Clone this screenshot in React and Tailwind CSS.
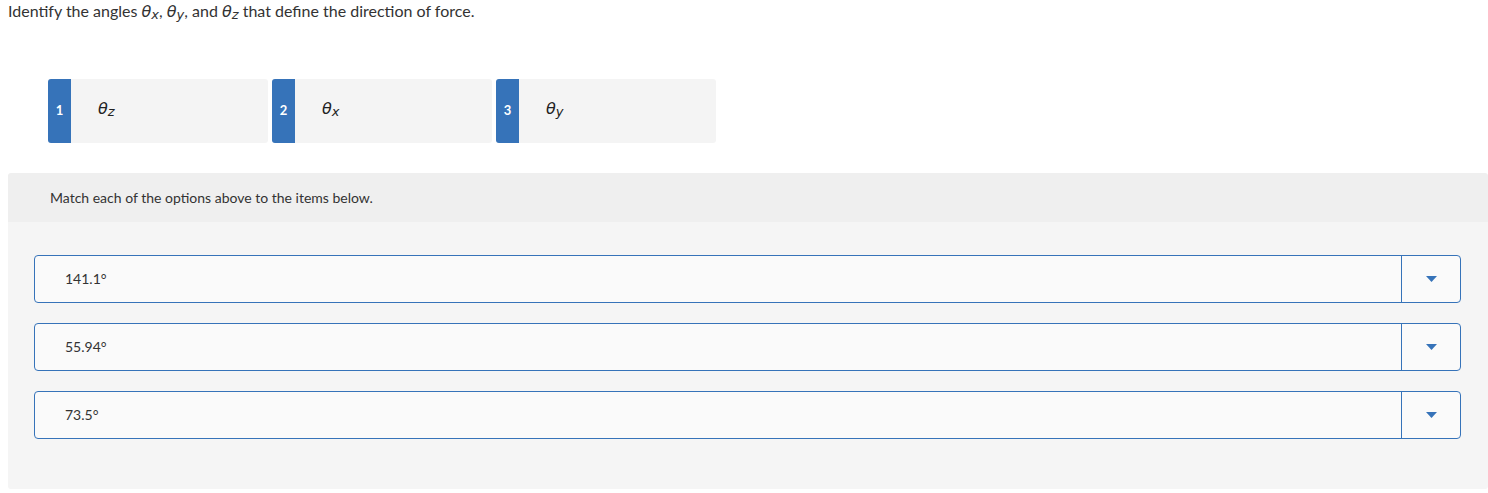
import React from "react";

const Theta = ({ sub, size = "text-[16px]" }) => (
    <span className={`italic font-['DejaVu_Sans',sans-serif] ${size}`}>
        θ<sub className="text-[13px] relative top-[2px]">{sub}</sub>
    </span>
);

const options = [
    { n: 1, sub: "z" },
    { n: 2, sub: "x" },
    { n: 3, sub: "y" },
];

const items = ["141.1°", "55.94°", "73.5°"];

export default function App() {
    return (
        <div className="w-[1488px] h-[493px] bg-white font-['Lato',sans-serif] text-[#333]">
            {/* Question */}
            <p className="pl-2 text-[16px] leading-[22px]">
                Identify the angles <Theta sub="x" />, <Theta sub="y" />, and <Theta sub="z" /> that define the direction of force.
            </p>

            {/* Options */}
            <div className="flex gap-1 pl-12 mt-[56px]">
                {options.map((o) => (
                    <div key={o.n} className="flex w-[220px] h-16 bg-[#f4f4f4] rounded-[3px] overflow-hidden">
                        <div className="w-[23px] bg-[#3673b9] text-white text-[13px] font-bold flex items-center justify-center">
                            {o.n}
                        </div>
                        <div className="flex items-center pl-[27px] pb-1 text-[#222]">
                            <Theta sub={o.sub} />
                        </div>
                    </div>
                ))}
            </div>

            {/* Match panel */}
            <div className="ml-2 mt-[30px] rounded-[3px] overflow-hidden">
                <div className="h-[49px] bg-[#efefef] pl-[42px] pt-[14px] text-[14px]">
                    Match each of the options above to the items below.
                </div>
                <div className="bg-[#f5f5f5] h-[267px] pt-[33px] pl-[26px] pr-[27px] flex flex-col gap-[20px]">
                    {items.map((v) => (
                        <div key={v} className="flex h-[48px] border border-[#3673b9] rounded-[4px] bg-[#fafafa]">
                            <div className="flex-1 flex items-center pl-[30px] pb-[2px] text-[14px]">{v}</div>
                            <div className="w-[59px] border-l border-[#3673b9] flex items-center justify-center">
                                <svg width="11" height="6" viewBox="0 0 11 6">
                                    <path d="M0 0 L11 0 L5.5 6 Z" fill="#3673b9" />
                                </svg>
                            </div>
                        </div>
                    ))}
                </div>
            </div>
        </div>
    );
}
